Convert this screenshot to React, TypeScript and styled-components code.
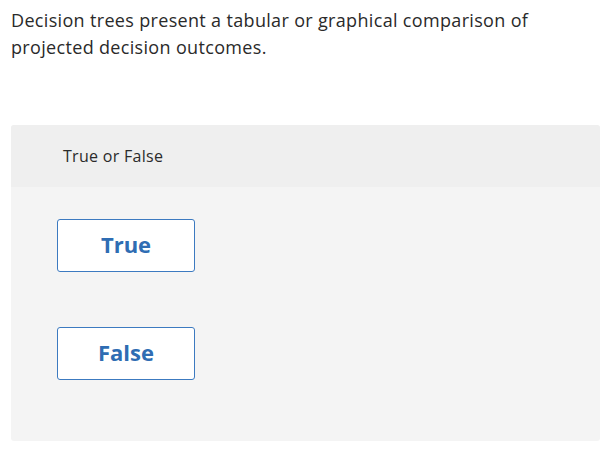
import React from 'react';
import styled, { createGlobalStyle } from 'styled-components';

const GlobalStyle = createGlobalStyle`
    html, body {
        margin: 0;
        padding: 0;
        background: #ffffff;
    }
    body {
        font-family: "Open Sans", "Liberation Sans", sans-serif;
        color: #222222;
    }
`;

const PageDiv = styled.div`
    width: 613px;
    height: 454px;
    box-sizing: border-box;
    padding: 7px 13px 0 11px;
`;

const PromptP = styled.p`
    margin: 0;
    font-size: 18px;
    line-height: 27px;
    letter-spacing: 0.33px;
    color: #2a2a2a;
    width: 560px;
`;

const PanelDiv = styled.div`
    margin-top: 64px;
    border-radius: 3px;
    overflow: hidden;
    background: #f4f4f4;
`;

const PanelHeader = styled.div`
    height: 62px;
    background: #efefef;
    display: flex;
    align-items: center;
    padding-left: 52px;
    font-size: 16px;
    letter-spacing: 0.3px;
    color: #2b2b2b;
`;

const ChoiceList = styled.div`
    display: flex;
    flex-direction: column;
    gap: 55px;
    padding: 32px 0 61px 46px;
`;

const ChoiceButton = styled.button`
    width: 138px;
    height: 53px;
    box-sizing: border-box;
    padding: 0 0 3px;
    background: #ffffff;
    border: 1px solid #3c7ac0;
    border-radius: 3px;
    color: #2f6db3;
    font-family: inherit;
    font-size: 22px;
    font-weight: 700;
    cursor: pointer;
`;

const App: React.FC = () => {
    return (
        <PageDiv>
            <GlobalStyle />
            <PromptP>Decision trees present a tabular or graphical comparison of projected decision outcomes.</PromptP>
            <PanelDiv>
                <PanelHeader>True or False</PanelHeader>
                <ChoiceList>
                    {['True', 'False'].map((label) => <ChoiceButton key={label}>{label}</ChoiceButton>)}
                </ChoiceList>
            </PanelDiv>
        </PageDiv>
    );
}

export default App;
